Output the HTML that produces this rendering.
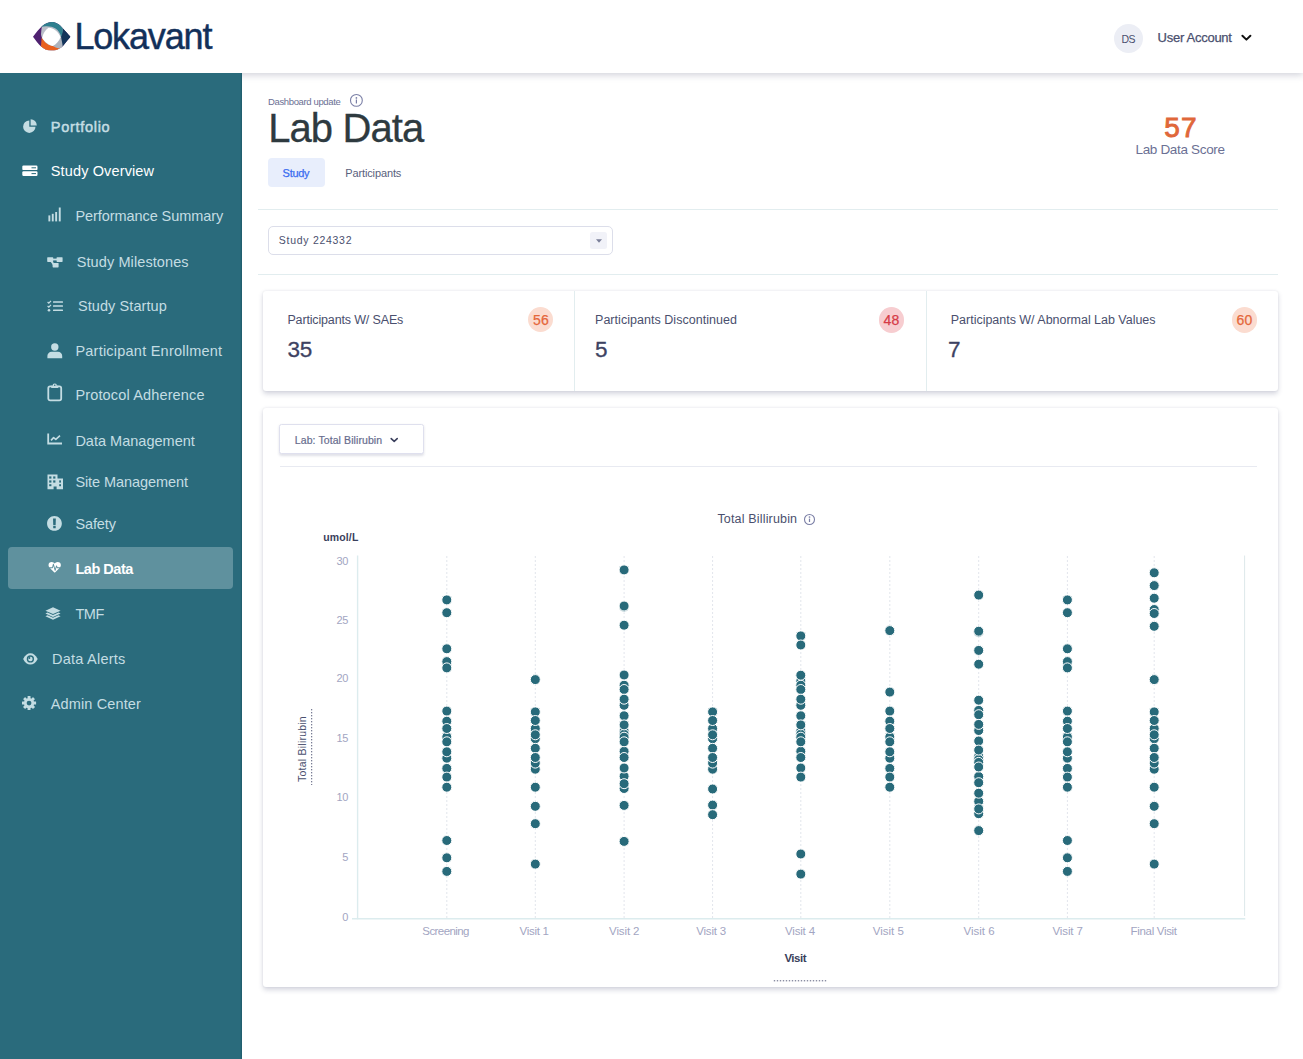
<!DOCTYPE html>
<html lang="en"><head><meta charset="utf-8"><title>Lab Data</title><style>
html,body{margin:0;padding:0}
body{width:1303px;height:1059px;position:relative;overflow:hidden;background:#fff;font-family:"Liberation Sans", Arial, sans-serif}
.t{position:absolute;white-space:nowrap;line-height:1;margin:0;padding:0}
.ic{position:absolute;overflow:visible;display:block}
#hdr{position:absolute;left:0;top:0;width:1303px;height:73px;background:#fff;box-shadow:0 2px 7px rgba(40,45,80,.22);z-index:0}
#side{position:absolute;left:0;top:73px;width:241.7px;height:986px;background:#2a6b7c;box-shadow:inset -1.2px 0 0 #215f6f}
#active{position:absolute;left:8.4px;top:547.2px;width:224.2px;height:41.4px;border-radius:4px;background:#5f919e}
.hl{position:absolute;height:1px;background:#e2edef}
.vl{position:absolute;width:1px;background:#e2edef}
.card{position:absolute;background:#fff;border-radius:3px;box-shadow:0 2.5px 5px rgba(50,55,100,.2),0 0 2px rgba(50,60,100,.10)}
</style></head>
<body>
<header>
<div id="hdr"></div>
<svg class="ic" style="left:32.9px;top:21.8px;width:37.5px;height:28.6px" viewBox="150 170 815 622" preserveAspectRatio="none">
<defs><clipPath id="lens"><path d="M150,490 C230,380 300,300 345,260 C420,195 500,172 560,172 C650,172 730,230 790,298 C860,370 920,440 965,490 C920,545 860,620 800,690 C720,770 620,792 540,792 C460,792 380,750 325,702 C270,650 200,560 150,490 Z"/></clipPath></defs>
<g clip-path="url(#lens)">
<rect x="100" y="100" width="900" height="760" fill="#4f2170"/>
<path d="M345,240 L800,240 L800,820 L325,820 C335,700 350,600 345,515 C330,470 322,440 325,420 C328,360 338,300 345,240Z" fill="#b9bec8"/>
<path d="M700,480 L800,480 L800,760 L560,760 L580,690 Z" fill="#adb3bd"/>
<path d="M795,280 C800,400 762,450 760,490 C768,560 790,620 796,710 L1000,820 L1000,180 Z" fill="#12345a"/>
<path d="M338,505 C370,545 400,600 450,640 C500,680 540,690 580,694 C620,720 660,738 725,746 L725,830 L300,830 L325,700 Z" fill="#e9601f"/>
<path d="M330,278 L330,140 L830,140 L797,300 C800,380 785,445 762,492 C740,420 700,350 640,312 C580,277 500,262 430,265 C400,265 360,270 330,278 Z" fill="#2f7f8e"/>
<path d="M480,298 C570,285 705,380 746,500 C722,580 655,650 580,692 C480,665 378,585 349,510 C368,420 420,340 480,298 Z" fill="#ffffff"/>
</g></svg>
<div class="t " style="left:74.4px;top:18.8px;font-size:36px;color:#12305a;letter-spacing:-1.16px;-webkit-text-stroke:0.45px #12305a;">Lokavant</div>
<div style="position:absolute;left:1113.5px;top:23.5px;width:29px;height:29px;border-radius:50%;background:#eceef5"></div>
<div class="t " style="left:1121.5px;top:34.2px;font-size:10.5px;color:#4a4f6e;letter-spacing:-0.59px;">DS</div>
<div class="t " style="left:1157.6px;top:31.0px;font-size:13px;color:#4a4f6e;letter-spacing:-0.27px;-webkit-text-stroke:0.25px #4a4f6e;">User Account</div>
<svg class="ic" style="left:1239.0px;top:32.0px;width:14px;height:12px" viewBox="0 0 14 12"><path d="M3.4 3.8 L7.4 7.6 L11.4 3.8" fill="none" stroke="#111" stroke-width="2" stroke-linecap="round" stroke-linejoin="round"/></svg>
</header>
<nav>
<div id="side"></div>
<div id="active"></div>
<svg class="ic" style="left:23.2px;top:118.8px;width:14px;height:14px" viewBox="0 0 14 14"><path d="M6.3 7.7 L6.3 1.5 A6.2 6.2 0 1 0 12.5 7.7 Z" fill="#c4dde3"/><path d="M7.6 6.4 L7.6 0.2 A6.2 6.2 0 0 1 13.8 6.4 Z" fill="#c4dde3"/></svg>
<div class="t " style="left:50.8px;top:119.8px;font-size:14.5px;color:#c4dde3;letter-spacing:0.71px;-webkit-text-stroke:0.5px #c4dde3;">Portfolio</div>
<svg class="ic" style="left:22.0px;top:164.5px;width:16px;height:12px" viewBox="0 0 16 12"><rect x="0.3" y="0.5" width="15.2" height="4.6" rx="1.2" fill="#fff"/><rect x="0.3" y="6.3" width="15.2" height="4.6" rx="1.2" fill="#fff"/><rect x="9.5" y="2.3" width="4.5" height="1" fill="#2a6b7c"/><rect x="9.5" y="8.1" width="4.5" height="1" fill="#2a6b7c"/></svg>
<div class="t " style="left:50.8px;top:163.9px;font-size:14.5px;color:#ffffff;letter-spacing:0.13px;">Study Overview</div>
<svg class="ic" style="left:47.5px;top:206.5px;width:14px;height:15px" viewBox="0 0 14 15"><rect x="0.4" y="8.4" width="1.9" height="6" fill="#c4dde3"/><rect x="3.8" y="6.8" width="1.9" height="7.6" fill="#c4dde3"/><rect x="7.2" y="5" width="1.9" height="9.4" fill="#c4dde3"/><rect x="10.8" y="0.5" width="1.9" height="13.9" fill="#c4dde3"/></svg>
<div class="t " style="left:75.4px;top:208.9px;font-size:14.5px;color:#c4dde3;letter-spacing:-0.07px;">Performance Summary</div>
<svg class="ic" style="left:46.7px;top:256.6px;width:16px;height:10.6px" viewBox="0 0 16 10.6"><rect x="0.2" y="0.2" width="6" height="4.7" rx="0.6" fill="#c4dde3"/><rect x="9.6" y="0.2" width="6" height="4.7" rx="0.6" fill="#c4dde3"/><rect x="5.6" y="5.9" width="6" height="4.5" rx="0.6" fill="#c4dde3"/><rect x="5" y="1.6" width="6" height="1.8" fill="#c4dde3"/><path d="M3.6 3.2 L7.6 8.6" stroke="#c4dde3" stroke-width="1.9" fill="none"/></svg>
<div class="t " style="left:76.7px;top:254.7px;font-size:14.5px;color:#c4dde3;letter-spacing:0.10px;">Study Milestones</div>
<svg class="ic" style="left:46.5px;top:299.5px;width:17px;height:12px" viewBox="0 0 17 12"><path d="M0.6 2 L1.8 3.2 L4 0.8" stroke="#c4dde3" stroke-width="1.2" fill="none"/><path d="M0.6 6 L1.8 7.2 L4 4.8" stroke="#c4dde3" stroke-width="1.2" fill="none"/><circle cx="2" cy="10.2" r="1.3" fill="#c4dde3"/><rect x="6" y="1.3" width="10" height="1.5" rx=".5" fill="#c4dde3"/><rect x="6" y="5.3" width="10" height="1.5" rx=".5" fill="#c4dde3"/><rect x="6" y="9.4" width="10" height="1.5" rx=".5" fill="#c4dde3"/></svg>
<div class="t " style="left:77.9px;top:299.3px;font-size:14.5px;color:#c4dde3;letter-spacing:0.09px;">Study Startup</div>
<svg class="ic" style="left:46.5px;top:342.8px;width:16px;height:16px" viewBox="0 0 16 16"><circle cx="7.8" cy="4" r="3.7" fill="#c4dde3"/><path d="M0.4 15.2 L0.4 13 C0.4 10.4 2.4 8.8 4.6 8.8 L11 8.8 C13.2 8.8 15.2 10.4 15.2 13 L15.2 15.2 Z" fill="#c4dde3"/></svg>
<div class="t " style="left:75.4px;top:343.9px;font-size:14.5px;color:#c4dde3;letter-spacing:0.23px;">Participant Enrollment</div>
<svg class="ic" style="left:46.5px;top:382.6px;width:16px;height:19px" viewBox="0 0 16 19"><rect x="1.3" y="3.4" width="12.9" height="14" rx="1.8" fill="none" stroke="#c4dde3" stroke-width="1.8"/><path d="M4.2 5 L4.2 2.8 L5.9 2.8 A1.9 1.9 0 1 1 9.6 2.8 L11.3 2.8 L11.3 5 Z" fill="#c4dde3"/><circle cx="7.75" cy="2.2" r="0.75" fill="#2a6b7c"/></svg>
<div class="t " style="left:75.4px;top:387.6px;font-size:14.5px;color:#c4dde3;letter-spacing:0.15px;">Protocol Adherence</div>
<svg class="ic" style="left:46.5px;top:433.3px;width:16px;height:12px" viewBox="0 0 16 12"><path d="M1.2 0.4 L1.2 10.5 L15 10.5" stroke="#c4dde3" stroke-width="1.8" fill="none"/><path d="M4 7.4 L6.6 4.6 L8.8 6.4 L13 2.6" stroke="#c4dde3" stroke-width="1.6" fill="none" stroke-linejoin="round"/></svg>
<div class="t " style="left:75.4px;top:433.6px;font-size:14.5px;color:#c4dde3;letter-spacing:0.01px;">Data Management</div>
<svg class="ic" style="left:46.5px;top:474.0px;width:17px;height:16px" viewBox="0 0 17 16"><path d="M0.5 0.5 L10.5 0.5 L10.5 4.5 L16 4.5 L16 15.3 L9.6 15.3 L9.6 12.6 L6.6 12.6 L6.6 15.3 L0.5 15.3 Z" fill="#c4dde3"/><g fill="#2a6b7c"><rect x="2.2" y="2.4" width="2.2" height="2.2"/><rect x="6.2" y="2.4" width="2.2" height="2.2"/><rect x="2.2" y="6.4" width="2.2" height="2.2"/><rect x="6.2" y="6.4" width="2.2" height="2.2"/><rect x="2.2" y="10.2" width="2.2" height="2"/><rect x="12.2" y="6.4" width="1.8" height="2.2"/><rect x="12.2" y="10.2" width="1.8" height="2"/></g></svg>
<div class="t " style="left:75.4px;top:475.0px;font-size:14.5px;color:#c4dde3;letter-spacing:-0.08px;">Site Management</div>
<svg class="ic" style="left:47.0px;top:515.6px;width:14.9px;height:14.8px" viewBox="0 -1408 1536 1536" preserveAspectRatio="xMidYMid meet"><path transform="scale(1,-1)" fill="#c4dde3" d="M768 1408C344 1408 0 1064 0 640C0 216 344 -128 768 -128C1192 -128 1536 216 1536 640C1536 1064 1192 1408 768 1408ZM896 161C896 143 882 128 865 128H673C655 128 640 143 640 161V351C640 369 655 384 673 384H865C882 384 896 369 896 351ZM894 505C893 491 878 480 860 480H675C656 480 641 491 641 505L624 1126C624 1133 627 1140 634 1144C640 1149 649 1152 658 1152H878C887 1152 896 1149 902 1144C909 1140 912 1133 912 1126Z"/></svg>
<div class="t " style="left:75.4px;top:516.8px;font-size:14.5px;color:#c4dde3;letter-spacing:-0.10px;">Safety</div>
<svg class="ic" style="left:47.9px;top:562.3px;width:13.4px;height:10.6px" viewBox="0 -1408 1792 1536" preserveAspectRatio="xMidYMid meet"><path transform="scale(1,-1)" fill="#ffffff" d="M1280 512C1256 512 1234 526 1223 547L1167 659L1021 174C1013 147 988 128 960 128C960 128 960 128 960 128C931 128 906 147 898 174L708 841L638 560C631 532 605 512 576 512H207C218 500 226 493 228 492L852 -110C864 -122 880 -128 896 -128C912 -128 928 -122 940 -110L1563 490C1565 492 1573 499 1585 512ZM1792 940C1792 1233 1613 1408 1314 1408C1139 1408 975 1270 896 1192C817 1270 653 1408 478 1408C179 1408 0 1233 0 940C0 825 50 720 103 640H526L642 1104C649 1132 674 1152 703 1152C733 1152 758 1133 766 1106L962 420L1091 850C1098 876 1120 893 1147 896C1172 898 1198 884 1209 861L1320 640H1689C1742 720 1792 825 1792 940Z"/></svg>
<div class="t " style="left:75.4px;top:561.7px;font-size:14.5px;color:#ffffff;letter-spacing:-0.46px;font-weight:700;">Lab Data</div>
<svg class="ic" style="left:45.2px;top:607.4px;width:16px;height:13.2px" viewBox="0 0 16 13.2"><path d="M8 0.3 L15.6 3.7 L8 7.1 L0.4 3.7 Z" fill="#c4dde3"/><path d="M2.5 5.4 L0.4 6.4 L8 9.9 L15.6 6.4 L13.5 5.4 L8 7.9 Z" fill="#c4dde3"/><path d="M2.5 8.3 L0.4 9.3 L8 12.8 L15.6 9.3 L13.5 8.3 L8 10.8 Z" fill="#c4dde3"/></svg>
<div class="t " style="left:75.4px;top:606.9px;font-size:14.5px;color:#c4dde3;letter-spacing:-0.40px;">TMF</div>
<svg class="ic" style="left:22.6px;top:652.5px;width:14.8px;height:11.8px" viewBox="0 0 15 12"><path d="M0.1 6 C2 2.2 4.6 0.2 7.5 0.2 C10.4 0.2 13 2.2 14.9 6 C13 9.8 10.4 11.8 7.5 11.8 C4.6 11.8 2 9.8 0.1 6 Z" fill="#c4dde3"/><circle cx="7.5" cy="6" r="3.7" fill="#2a6b7c"/><circle cx="7.5" cy="6" r="2.3" fill="#c4dde3"/><circle cx="6.5" cy="5" r="1" fill="#2a6b7c"/></svg>
<div class="t " style="left:52.0px;top:651.5px;font-size:14.5px;color:#c4dde3;letter-spacing:0.24px;">Data Alerts</div>
<svg class="ic" style="left:22.3px;top:696.0px;width:14.1px;height:14.1px" viewBox="0 0 14.4 14.4"><g transform="translate(7.2,7.2)" fill="#c4dde3"><circle r="5.25"/><rect x="-1.5" y="-7.2" width="3" height="3.4" rx="0.3" transform="rotate(0)"/><rect x="-1.5" y="-7.2" width="3" height="3.4" rx="0.3" transform="rotate(45)"/><rect x="-1.5" y="-7.2" width="3" height="3.4" rx="0.3" transform="rotate(90)"/><rect x="-1.5" y="-7.2" width="3" height="3.4" rx="0.3" transform="rotate(135)"/><rect x="-1.5" y="-7.2" width="3" height="3.4" rx="0.3" transform="rotate(180)"/><rect x="-1.5" y="-7.2" width="3" height="3.4" rx="0.3" transform="rotate(225)"/><rect x="-1.5" y="-7.2" width="3" height="3.4" rx="0.3" transform="rotate(270)"/><rect x="-1.5" y="-7.2" width="3" height="3.4" rx="0.3" transform="rotate(315)"/><circle r="2.45" fill="#2a6b7c"/></g></svg>
<div class="t " style="left:50.8px;top:697.2px;font-size:14.5px;color:#c4dde3;letter-spacing:0.13px;">Admin Center</div>
</nav>
<main>
<div class="t " style="left:268.0px;top:97.3px;font-size:9.5px;color:#6b7094;letter-spacing:-0.36px;">Dashboard update</div>
<svg class="ic" style="left:349.3px;top:93.4px;width:14.8px;height:14.8px" viewBox="0 0 14.8 14.8"><circle cx="7.4" cy="7.4" r="5.9" fill="none" stroke="#7a7fa6" stroke-width="1.1"/><rect x="6.800000000000001" y="6.5" width="1.2" height="3.97" fill="#7a7fa6"/><circle cx="7.4" cy="4.9" r="0.85" fill="#7a7fa6"/></svg>
<div class="t " style="left:268.2px;top:107.7px;font-size:40px;color:#2e3a3f;letter-spacing:-0.91px;-webkit-text-stroke:0.3px #2e3a3f;">Lab Data</div>
<div style="position:absolute;left:268px;top:158px;width:57px;height:28.5px;border-radius:4px;background:#e8eefc"></div>
<div class="t " style="left:282.6px;top:168.0px;font-size:11px;color:#3a6cf0;letter-spacing:-0.28px;-webkit-text-stroke:0.25px #3a6cf0;">Study</div>
<div class="t " style="left:345.2px;top:168.0px;font-size:11px;color:#5a5f7d;letter-spacing:-0.12px;">Participants</div>
<div class="t " style="left:1164.2px;top:113.5px;font-size:28px;color:#e0673a;letter-spacing:1.26px;-webkit-text-stroke:0.9px #e0673a;">57</div>
<div class="t " style="left:1135.5px;top:142.7px;font-size:13.5px;color:#6b7094;letter-spacing:-0.33px;">Lab Data Score</div>
<div class="hl" style="left:258px;top:209px;width:1019.5px"></div>
<div class="hl" style="left:258px;top:273.5px;width:1019.5px"></div>
<div style="position:absolute;left:268px;top:226.2px;width:344.9px;height:29.1px;border:1px solid #dcdeea;border-radius:5px;box-sizing:border-box;background:#fff"></div>
<div style="position:absolute;left:589.5px;top:232.4px;width:17.5px;height:16.5px;border-radius:2.5px;background:#f1f2f8"></div>
<svg class="ic" style="left:594.5px;top:237.5px;width:8px;height:6px" viewBox="0 0 8 6"><path d="M1 1.2 L7 1.2 L4 4.8 Z" fill="#7a7f99"/></svg>
<div class="t " style="left:278.8px;top:235.1px;font-size:10.5px;color:#4a4f6e;letter-spacing:0.72px;">Study 224332</div>
<div class="card" style="left:263.2px;top:291px;width:1014.4px;height:99.8px"></div>
<div class="vl" style="left:574px;top:291px;height:99.8px"></div>
<div class="vl" style="left:926px;top:291px;height:99.8px"></div>
<div class="t " style="left:287.4px;top:313.6px;font-size:12.5px;color:#4a4f6e;letter-spacing:-0.15px;">Participants W/ SAEs</div>
<div class="t " style="left:287.4px;top:338.5px;font-size:22.5px;color:#3d4262;letter-spacing:-0.03px;-webkit-text-stroke:0.3px #3d4262;">35</div>
<div style="position:absolute;left:528.3px;top:307.3px;width:25.2px;height:25.2px;border-radius:50%;background:#fbdcd0"></div>
<div class="t " style="left:533.0px;top:313.1px;font-size:14px;color:#e5673b;letter-spacing:0.20px;-webkit-text-stroke:0.25px #e5673b;">56</div>
<div class="t " style="left:595.0px;top:313.6px;font-size:12.5px;color:#4a4f6e;letter-spacing:0.04px;">Participants Discontinued</div>
<div class="t " style="left:595.0px;top:338.5px;font-size:22.5px;color:#3d4262;letter-spacing:0.00px;-webkit-text-stroke:0.3px #3d4262;">5</div>
<div style="position:absolute;left:878.9px;top:307.4px;width:25.2px;height:25.2px;border-radius:50%;background:#f7cdd0"></div>
<div class="t " style="left:883.6px;top:313.2px;font-size:14px;color:#d63b47;letter-spacing:0.20px;-webkit-text-stroke:0.25px #d63b47;">48</div>
<div class="t " style="left:950.8px;top:313.6px;font-size:12.5px;color:#4a4f6e;letter-spacing:-0.02px;">Participants W/ Abnormal Lab Values</div>
<div class="t " style="left:948.0px;top:338.5px;font-size:22.5px;color:#3d4262;letter-spacing:0.00px;-webkit-text-stroke:0.3px #3d4262;">7</div>
<div style="position:absolute;left:1231.8px;top:307.4px;width:25.2px;height:25.2px;border-radius:50%;background:#fbdcd0"></div>
<div class="t " style="left:1236.5px;top:313.2px;font-size:14px;color:#e5673b;letter-spacing:0.20px;-webkit-text-stroke:0.25px #e5673b;">60</div>
<div class="card" style="left:263.2px;top:407.8px;width:1014.4px;height:579px"></div>
<div style="position:absolute;left:279.2px;top:424.4px;width:144.8px;height:29.2px;border:1px solid #dfe0ee;border-radius:2.5px;box-sizing:border-box;background:#fff;box-shadow:0 1.5px 2.5px rgba(60,66,110,.16)"></div>
<div class="t " style="left:294.8px;top:434.5px;font-size:10.5px;color:#676c8e;letter-spacing:0.09px;-webkit-text-stroke:0.2px #676c8e;">Lab: Total Bilirubin</div>
<svg class="ic" style="left:389.0px;top:436.0px;width:11px;height:8px" viewBox="0 0 11 8"><path d="M2.2 2.6 L5.2 5.3 L8.2 2.6" fill="none" stroke="#3a3f5c" stroke-width="1.6" stroke-linecap="round" stroke-linejoin="round"/></svg>
<div class="hl" style="left:280px;top:466px;width:976.5px;background:#e8eaf1"></div>
<div class="t " style="left:717.4px;top:512.7px;font-size:12.5px;color:#4a4f6e;letter-spacing:0.17px;">Total Billirubin</div>
<svg class="ic" style="left:803.1px;top:512.5px;width:13.0px;height:13.0px" viewBox="0 0 13.0 13.0"><circle cx="6.5" cy="6.5" r="5.0" fill="none" stroke="#7b7fa6" stroke-width="1.1"/><rect x="5.9" y="5.6" width="1.2" height="3.41" fill="#7b7fa6"/><circle cx="6.5" cy="4.0" r="0.85" fill="#7b7fa6"/></svg>
<div class="t " style="left:323.2px;top:531.7px;font-size:10.5px;color:#3a3f5c;letter-spacing:0.14px;font-weight:700;">umol/L</div>
<div class="t " style="left:336.5px;top:555.7px;font-size:11px;color:#a2a5c2;letter-spacing:-0.40px;">30</div>
<div class="t " style="left:336.5px;top:614.7px;font-size:11px;color:#a2a5c2;letter-spacing:-0.40px;">25</div>
<div class="t " style="left:336.5px;top:673.3px;font-size:11px;color:#a2a5c2;letter-spacing:-0.40px;">20</div>
<div class="t " style="left:336.5px;top:732.6px;font-size:11px;color:#a2a5c2;letter-spacing:-0.40px;">15</div>
<div class="t " style="left:336.5px;top:791.8px;font-size:11px;color:#a2a5c2;letter-spacing:-0.40px;">10</div>
<div class="t " style="left:342.2px;top:851.7px;font-size:11px;color:#a2a5c2;letter-spacing:-0.40px;">5</div>
<div class="t " style="left:342.2px;top:912.2px;font-size:11px;color:#a2a5c2;letter-spacing:-0.40px;">0</div>
<div class="t " style="left:422.3px;top:925.8px;font-size:11.5px;color:#a2a5c2;letter-spacing:-0.57px;">Screening</div>
<div class="t " style="left:519.6px;top:925.8px;font-size:11.5px;color:#a2a5c2;letter-spacing:-0.30px;">Visit 1</div>
<div class="t " style="left:609.1px;top:925.8px;font-size:11.5px;color:#a2a5c2;letter-spacing:-0.13px;">Visit 2</div>
<div class="t " style="left:696.2px;top:925.8px;font-size:11.5px;color:#a2a5c2;letter-spacing:-0.18px;">Visit 3</div>
<div class="t " style="left:785.0px;top:925.8px;font-size:11.5px;color:#a2a5c2;letter-spacing:-0.18px;">Visit 4</div>
<div class="t " style="left:872.8px;top:925.8px;font-size:11.5px;color:#a2a5c2;letter-spacing:-0.02px;">Visit 5</div>
<div class="t " style="left:963.6px;top:925.8px;font-size:11.5px;color:#a2a5c2;letter-spacing:-0.02px;">Visit 6</div>
<div class="t " style="left:1052.5px;top:925.8px;font-size:11.5px;color:#a2a5c2;letter-spacing:-0.13px;">Visit 7</div>
<div class="t " style="left:1130.5px;top:925.8px;font-size:11.5px;color:#a2a5c2;letter-spacing:-0.31px;">Final Visit</div>
<div class="t " style="left:784.4px;top:952.6px;font-size:11.5px;color:#3a3f5c;letter-spacing:-0.49px;font-weight:700;">Visit</div>
<svg class="ic" style="left:0;top:0;width:1303px;height:1059px" viewBox="0 0 1303 1059"><g fill="#286a7a" stroke="#fff" stroke-width="1"><line x1="446.8" y1="556" x2="446.8" y2="918" stroke="#e2e5ec" stroke-width="1" stroke-dasharray="2 2"/><line x1="535.3" y1="556" x2="535.3" y2="918" stroke="#e2e5ec" stroke-width="1" stroke-dasharray="2 2"/><line x1="624.1" y1="556" x2="624.1" y2="918" stroke="#e2e5ec" stroke-width="1" stroke-dasharray="2 2"/><line x1="712.6" y1="556" x2="712.6" y2="918" stroke="#e2e5ec" stroke-width="1" stroke-dasharray="2 2"/><line x1="800.8" y1="556" x2="800.8" y2="918" stroke="#e2e5ec" stroke-width="1" stroke-dasharray="2 2"/><line x1="889.8" y1="556" x2="889.8" y2="918" stroke="#e2e5ec" stroke-width="1" stroke-dasharray="2 2"/><line x1="978.7" y1="556" x2="978.7" y2="918" stroke="#e2e5ec" stroke-width="1" stroke-dasharray="2 2"/><line x1="1067.4" y1="556" x2="1067.4" y2="918" stroke="#e2e5ec" stroke-width="1" stroke-dasharray="2 2"/><line x1="1154.2" y1="556" x2="1154.2" y2="918" stroke="#e2e5ec" stroke-width="1" stroke-dasharray="2 2"/><line x1="357.6" y1="555.5" x2="357.6" y2="919.3" stroke="#dcecee" stroke-width="1.4"/><line x1="1244.6" y1="555.5" x2="1244.6" y2="916" stroke="#dde8ea" stroke-width="1"/><line x1="352" y1="918.7" x2="1245.3" y2="918.7" stroke="#dcecee" stroke-width="1.5"/><circle cx="446.8" cy="736.9" r="5"/><circle cx="446.8" cy="758.2" r="5"/><circle cx="446.8" cy="599.9" r="5"/><circle cx="446.8" cy="612.7" r="5"/><circle cx="446.8" cy="648.8" r="5"/><circle cx="446.8" cy="661.6" r="5"/><circle cx="446.8" cy="667.9" r="5"/><circle cx="446.8" cy="711.1" r="5"/><circle cx="446.8" cy="721.2" r="5"/><circle cx="446.8" cy="728.5" r="5"/><circle cx="446.8" cy="741.8" r="5"/><circle cx="446.8" cy="751.8" r="5"/><circle cx="446.8" cy="768.4" r="5"/><circle cx="446.8" cy="777.1" r="5"/><circle cx="446.8" cy="840.5" r="5"/><circle cx="446.8" cy="857.8" r="5"/><circle cx="446.8" cy="871.4" r="5"/><circle cx="446.8" cy="787.2" r="5"/><circle cx="535.3" cy="728.5" r="5"/><circle cx="535.3" cy="738.7" r="5"/><circle cx="535.3" cy="769.2" r="5"/><circle cx="535.3" cy="679.6" r="5"/><circle cx="535.3" cy="711.9" r="5"/><circle cx="535.3" cy="720.5" r="5"/><circle cx="535.3" cy="748.3" r="5"/><circle cx="535.3" cy="763.1" r="5"/><circle cx="535.3" cy="787.2" r="5"/><circle cx="535.3" cy="806.3" r="5"/><circle cx="535.3" cy="823.7" r="5"/><circle cx="535.3" cy="864.1" r="5"/><circle cx="535.3" cy="734.8" r="5"/><circle cx="535.3" cy="757.5" r="5"/><circle cx="624.1" cy="607.0" r="5"/><circle cx="624.1" cy="685.2" r="5"/><circle cx="624.1" cy="705.3" r="5"/><circle cx="624.1" cy="731.3" r="5"/><circle cx="624.1" cy="734.2" r="5"/><circle cx="624.1" cy="737.2" r="5"/><circle cx="624.1" cy="751.3" r="5"/><circle cx="624.1" cy="776.2" r="5"/><circle cx="624.1" cy="788.5" r="5"/><circle cx="624.1" cy="569.9" r="5"/><circle cx="624.1" cy="606.0" r="5"/><circle cx="624.1" cy="625.2" r="5"/><circle cx="624.1" cy="675.0" r="5"/><circle cx="624.1" cy="689.5" r="5"/><circle cx="624.1" cy="699.2" r="5"/><circle cx="624.1" cy="715.8" r="5"/><circle cx="624.1" cy="724.9" r="5"/><circle cx="624.1" cy="741.8" r="5"/><circle cx="624.1" cy="757.5" r="5"/><circle cx="624.1" cy="768.0" r="5"/><circle cx="624.1" cy="805.4" r="5"/><circle cx="624.1" cy="841.4" r="5"/><circle cx="624.1" cy="783.7" r="5"/><circle cx="712.6" cy="728.5" r="5"/><circle cx="712.6" cy="738.7" r="5"/><circle cx="712.6" cy="769.2" r="5"/><circle cx="712.6" cy="711.9" r="5"/><circle cx="712.6" cy="720.5" r="5"/><circle cx="712.6" cy="748.3" r="5"/><circle cx="712.6" cy="763.1" r="5"/><circle cx="712.6" cy="789.0" r="5"/><circle cx="712.6" cy="805.1" r="5"/><circle cx="712.6" cy="814.7" r="5"/><circle cx="712.6" cy="734.8" r="5"/><circle cx="712.6" cy="757.5" r="5"/><circle cx="800.8" cy="681.1" r="5"/><circle cx="800.8" cy="685.2" r="5"/><circle cx="800.8" cy="705.3" r="5"/><circle cx="800.8" cy="731.3" r="5"/><circle cx="800.8" cy="734.2" r="5"/><circle cx="800.8" cy="737.2" r="5"/><circle cx="800.8" cy="751.3" r="5"/><circle cx="800.8" cy="635.9" r="5"/><circle cx="800.8" cy="645.0" r="5"/><circle cx="800.8" cy="675.2" r="5"/><circle cx="800.8" cy="689.5" r="5"/><circle cx="800.8" cy="699.2" r="5"/><circle cx="800.8" cy="715.8" r="5"/><circle cx="800.8" cy="724.9" r="5"/><circle cx="800.8" cy="741.8" r="5"/><circle cx="800.8" cy="757.5" r="5"/><circle cx="800.8" cy="768.0" r="5"/><circle cx="800.8" cy="777.1" r="5"/><circle cx="800.8" cy="854.0" r="5"/><circle cx="800.8" cy="874.1" r="5"/><circle cx="889.8" cy="736.9" r="5"/><circle cx="889.8" cy="758.2" r="5"/><circle cx="889.8" cy="630.6" r="5"/><circle cx="889.8" cy="692.1" r="5"/><circle cx="889.8" cy="711.1" r="5"/><circle cx="889.8" cy="721.2" r="5"/><circle cx="889.8" cy="728.5" r="5"/><circle cx="889.8" cy="741.8" r="5"/><circle cx="889.8" cy="751.8" r="5"/><circle cx="889.8" cy="768.4" r="5"/><circle cx="889.8" cy="777.1" r="5"/><circle cx="889.8" cy="787.2" r="5"/><circle cx="978.7" cy="632.2" r="5"/><circle cx="978.7" cy="710.4" r="5"/><circle cx="978.7" cy="730.5" r="5"/><circle cx="978.7" cy="756.5" r="5"/><circle cx="978.7" cy="759.4" r="5"/><circle cx="978.7" cy="762.4" r="5"/><circle cx="978.7" cy="776.5" r="5"/><circle cx="978.7" cy="801.4" r="5"/><circle cx="978.7" cy="813.7" r="5"/><circle cx="978.7" cy="595.1" r="5"/><circle cx="978.7" cy="631.2" r="5"/><circle cx="978.7" cy="650.4" r="5"/><circle cx="978.7" cy="700.2" r="5"/><circle cx="978.7" cy="714.7" r="5"/><circle cx="978.7" cy="724.4" r="5"/><circle cx="978.7" cy="741.0" r="5"/><circle cx="978.7" cy="750.1" r="5"/><circle cx="978.7" cy="767.0" r="5"/><circle cx="978.7" cy="782.7" r="5"/><circle cx="978.7" cy="793.2" r="5"/><circle cx="978.7" cy="830.6" r="5"/><circle cx="978.7" cy="664.2" r="5"/><circle cx="978.7" cy="808.9" r="5"/><circle cx="1067.4" cy="736.9" r="5"/><circle cx="1067.4" cy="758.2" r="5"/><circle cx="1067.4" cy="599.9" r="5"/><circle cx="1067.4" cy="612.7" r="5"/><circle cx="1067.4" cy="648.8" r="5"/><circle cx="1067.4" cy="661.6" r="5"/><circle cx="1067.4" cy="667.9" r="5"/><circle cx="1067.4" cy="711.1" r="5"/><circle cx="1067.4" cy="721.2" r="5"/><circle cx="1067.4" cy="728.5" r="5"/><circle cx="1067.4" cy="741.8" r="5"/><circle cx="1067.4" cy="751.8" r="5"/><circle cx="1067.4" cy="768.4" r="5"/><circle cx="1067.4" cy="777.1" r="5"/><circle cx="1067.4" cy="840.5" r="5"/><circle cx="1067.4" cy="857.8" r="5"/><circle cx="1067.4" cy="871.4" r="5"/><circle cx="1067.4" cy="787.2" r="5"/><circle cx="1154.2" cy="609.5" r="5"/><circle cx="1154.2" cy="728.5" r="5"/><circle cx="1154.2" cy="738.7" r="5"/><circle cx="1154.2" cy="769.2" r="5"/><circle cx="1154.2" cy="572.8" r="5"/><circle cx="1154.2" cy="585.6" r="5"/><circle cx="1154.2" cy="598.2" r="5"/><circle cx="1154.2" cy="613.5" r="5"/><circle cx="1154.2" cy="626.3" r="5"/><circle cx="1154.2" cy="679.6" r="5"/><circle cx="1154.2" cy="711.9" r="5"/><circle cx="1154.2" cy="720.5" r="5"/><circle cx="1154.2" cy="748.3" r="5"/><circle cx="1154.2" cy="763.1" r="5"/><circle cx="1154.2" cy="787.2" r="5"/><circle cx="1154.2" cy="806.3" r="5"/><circle cx="1154.2" cy="823.7" r="5"/><circle cx="1154.2" cy="864.1" r="5"/><circle cx="1154.2" cy="734.8" r="5"/><circle cx="1154.2" cy="757.5" r="5"/><line x1="311.7" y1="709" x2="311.7" y2="785" stroke="#5a5f7d" stroke-width="1" stroke-dasharray="1.4 1.6"/><line x1="773.8" y1="980.8" x2="827.1" y2="980.8" stroke="#5a5f7d" stroke-width="1" stroke-dasharray="1.4 1.6"/></g></svg>
<div class="t" style="left:302.2px;top:749px;font-size:10.5px;color:#4a4f6e;transform:translate(-50%,-50%) rotate(-90deg);letter-spacing:0.23px">Total Bilirubin</div>
</main>
</body></html>
